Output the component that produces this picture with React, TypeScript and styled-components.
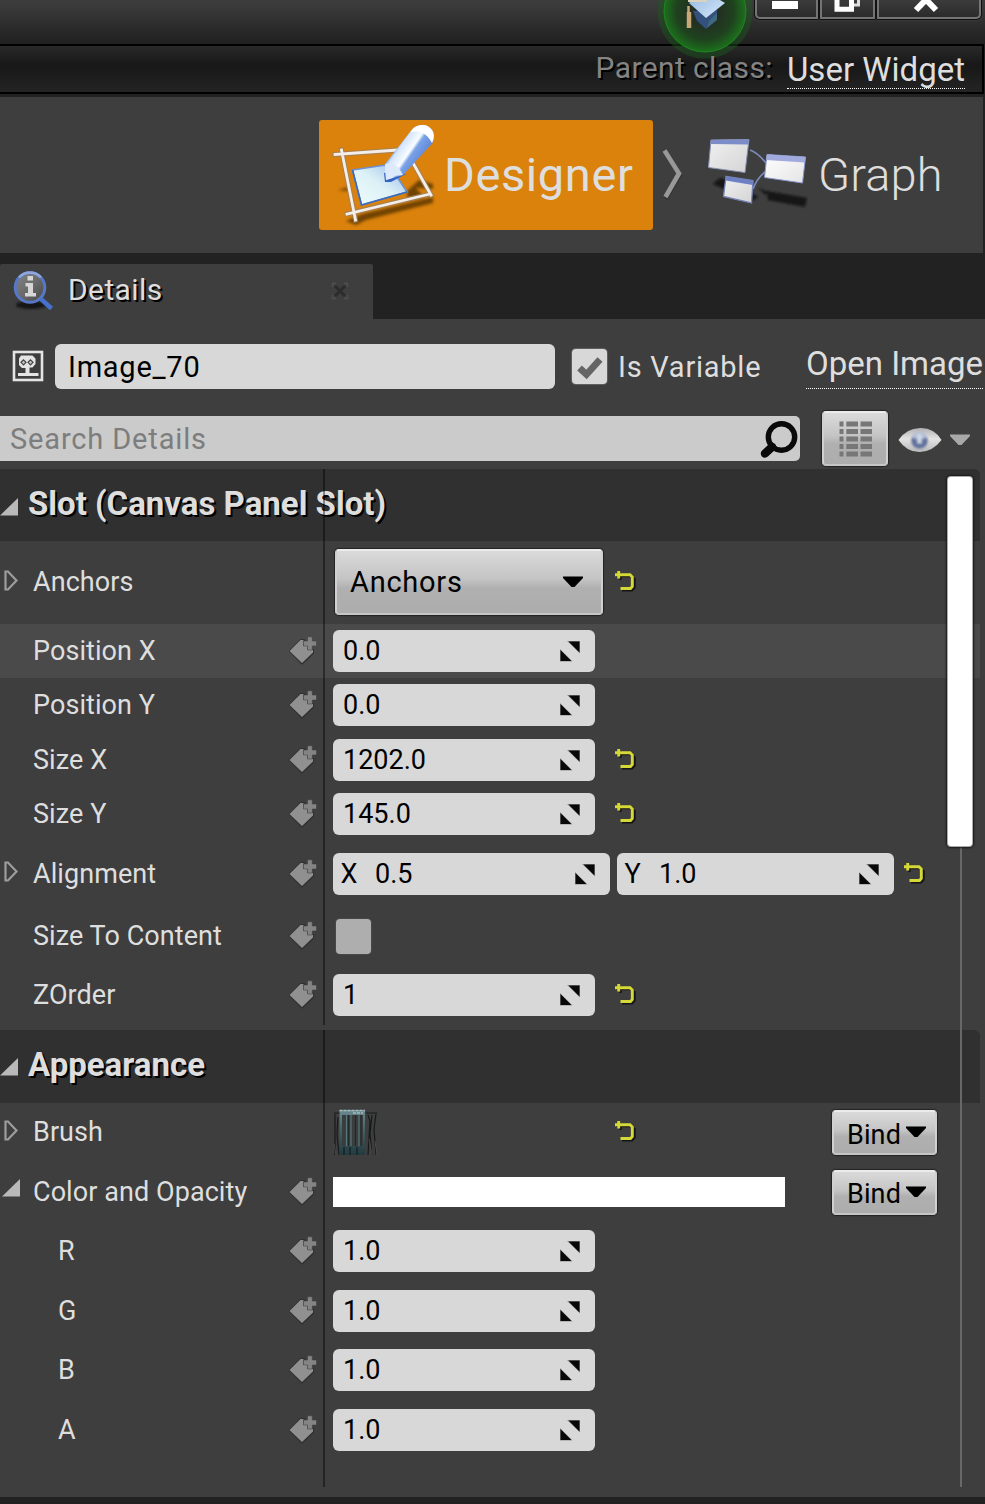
import React from 'react';
import styled, { createGlobalStyle } from 'styled-components';

const GlobalStyle = createGlobalStyle`
  * { box-sizing: border-box; }
  html, body { margin: 0; padding: 0; background: #222; }
  body { font-family: Roboto, "Liberation Sans", sans-serif; color: #dedede; overflow: hidden; }
  svg { display: block; flex: none; overflow: visible; }
`;

const Window = styled.div`
  width: 985px;
  height: 1504px;
  display: flex;
  flex-direction: column;
  background: #222;
  overflow: hidden;
  position: relative;
`;

/* ---------- title bar ---------- */

const TitleBar = styled.header`
  height: 44px;
  flex: none;
  display: flex;
  justify-content: flex-end;
  align-items: flex-start;
  gap: 2px;
  padding-right: 4px;
  background: linear-gradient(#3d3d3d 0, #353535 14px, #292929 30px, #212121 44px);
`;

const WindowButton = styled.button<{ $w: number; $first?: boolean; $last?: boolean }>`
  width: ${(p) => p.$w}px;
  height: 19px;
  padding: 0 5px 0 0;
  border: 2px solid #747474;
  border-top: 0;
  border-radius: 0 0 ${(p) => (p.$last ? 5 : 1)}px ${(p) => (p.$first ? 5 : 1)}px;
  background: linear-gradient(#3b3b3b, #2b2b2b);
  box-shadow: 0 0 0 1px #111, 0 2px 1px 1px #3d3d3d66;
  display: flex;
  justify-content: center;
  align-items: flex-start;
`;

const TutorialBadge = styled.div`
  position: absolute;
  left: 657px;
  top: -37px;
  width: 96px;
  height: 96px;
`;

const MenuBar = styled.div`
  height: 50px;
  flex: none;
  margin-right: 1px;
  border: solid #000;
  border-width: 2px 2px 2px 0;
  background: linear-gradient(#292929, #181818 40%, #1b1b1b 60%, #242424);
  display: flex;
  justify-content: flex-end;
  align-items: flex-start;
  padding-right: 17px;
`;

const ParentLabel = styled.span`
  position: relative;
  font-size: 30px;
  line-height: 36px;
  margin-top: 4px;
  margin-right: 14px;
  letter-spacing: 0.4px;
  color: #848484;
  text-shadow: 2px 2px 0 #000;
`;

const Link = styled.a<{ $top: number; $h: number }>`
  font-size: 33px;
  line-height: 40px;
  height: ${(p) => p.$h}px;
  margin-top: ${(p) => p.$top}px;
  color: #dedede;
  white-space: nowrap;
  border-bottom: 1px dotted #fff;
`;

/* ---------- mode toolbar ---------- */

const ModeBar = styled.nav`
  height: 156px;
  flex: none;
  margin: 3px 2px 0 0;
  background: #3e3e3e;
  display: flex;
  align-items: flex-start;
  padding: 23px 0 0 319px;
`;

const ModeButton = styled.button<{ $active?: boolean }>`
  width: ${(p) => (p.$active ? 334 : 250)}px;
  height: 110px;
  padding: 0 0 0 ${(p) => (p.$active ? 15 : 0)}px;
  border: 0;
  border-radius: 3px;
  background: ${(p) => (p.$active ? '#da820c' : 'transparent')};
  color: #dedede;
  font-family: inherit;
  font-size: 47px;
  font-weight: ${(p) => (p.$active ? 400 : 300)};
  letter-spacing: ${(p) => (p.$active ? 0.6 : 0.1)}px;
  display: flex;
  align-items: center;
  gap: ${(p) => (p.$active ? 10 : 8)}px;
`;

const ModeName = styled.span`
  padding-bottom: 1px;
`;

const ModeArrow = styled.div`
  width: 55px;
  height: 110px;
  padding: 28px 0 0 9px;
`;

/* ---------- tabs ---------- */

const TabStrip = styled.div`
  height: 66px;
  flex: none;
  display: flex;
  align-items: flex-end;
  background: #222;
`;

const Tab = styled.div`
  width: 373px;
  height: 55px;
  border-radius: 2px 2px 0 0;
  background: #3e3e3e;
  display: flex;
  align-items: flex-start;
  padding: 7px 24px 0 13px;
`;

const TabTitle = styled.span`
  flex: 1;
  margin-left: 15px;
  font-size: 30px;
  line-height: 38px;
  letter-spacing: 0.4px;
  text-shadow: 2px 2px 0 #000;
`;

const TabClose = styled.div`
  margin-top: 11px;
`;

/* ---------- details panel ---------- */

const Panel = styled.main`
  height: 1178px;
  flex: none;
  background: #3e3e3e;
  display: flex;
  flex-direction: column;
`;

const NameRow = styled.div`
  height: 97px;
  flex: none;
  display: flex;
  align-items: flex-start;
  padding: 25px 0 0 12px;
  overflow: hidden;
`;

const WidgetIconSlot = styled.div`
  margin-top: 6px;
`;

const NameField = styled.div`
  width: 500px;
  height: 45px;
  margin-left: 11px;
  padding-left: 13px;
  border-radius: 6px;
  background: #d8d8d8;
  color: #000;
  font-size: 29px;
  line-height: 46px;
  letter-spacing: 0.75px;
`;

const Check = styled.span<{ $on?: boolean }>`
  width: 35px;
  height: 35px;
  flex: none;
  border-radius: 4px;
  background: ${(p) => (p.$on ? '#d8d8d8' : '#aeaeae')};
  box-shadow: 0 0 1px 1px ${(p) => (p.$on ? '#88888880' : '#55555580')};
  display: flex;
  align-items: center;
  justify-content: center;
`;

const CheckLabel = styled.label`
  display: flex;
  align-items: center;
  gap: 11px;
  height: 45px;
  margin-left: 17px;
  width: 234px;
  font-size: 29px;
  letter-spacing: 0.75px;
  white-space: nowrap;
`;

const CheckSpacer = styled.div`
  padding-left: 2.5px;
`;

const SearchRow = styled.div`
  height: 53px;
  flex: none;
  display: flex;
  align-items: flex-start;
`;

const SearchField = styled.div`
  width: 800px;
  height: 45px;
  padding: 0 2px 0 10px;
  border-radius: 0 5px 5px 0;
  background: #cbcbcb;
  color: #7d7d7d;
  font-size: 29px;
  letter-spacing: 0.85px;
  display: flex;
  align-items: center;
  justify-content: space-between;
`;

const SlateButton = styled.button<{ $w: number; $h: number }>`
  width: ${(p) => p.$w}px;
  height: ${(p) => p.$h}px;
  flex: none;
  padding: 0;
  border: 2px solid;
  border-color: #ebebeb #d0d0d0 #c6c6c6 #d0d0d0;
  border-radius: 4px;
  background: linear-gradient(#dadada, #c4c4c4 45%, #b0b0b0 60%, #adadad);
  box-shadow: 0 0 1px 1px #1d1d1dcc;
  color: #000;
  font-family: inherit;
  font-size: 27px;
  display: flex;
  align-items: center;
  justify-content: center;
`;

const GridToggle = styled(SlateButton)`
  margin: -5px 10px 0 22px;
  padding-left: 2px;
`;

const AnchorsButton = styled(SlateButton)`
  justify-content: space-between;
  padding: 0 18px 0 13px;
  font-size: 29px;
  letter-spacing: 0.75px;
  margin-left: 2px;
  margin-right: 12px;
  margin-bottom: 2px;
`;

const BindButton = styled(SlateButton)`
  gap: 5px;
  padding: 4px 0 0 4px;
  letter-spacing: 0.1px;
  svg { margin-top: -5px; }
`;

const ViewOptions = styled.div`
  display: flex;
  align-items: center;
  gap: 8px;
  margin-top: 11px;
`;

const Properties = styled.div`
  position: relative;
  flex: 1;
`;

const Section = styled.section<{ $h: number }>`
  position: relative;
  height: ${(p) => p.$h}px;
  margin-bottom: 5px;
  &::after {
    content: '';
    position: absolute;
    left: 323px;
    top: 0;
    width: 2px;
    height: 100%;
    background: rgba(0, 0, 0, 0.42);
  }
`;

const SectionHeader = styled.h2<{ $h: number }>`
  width: 980px;
  height: ${(p) => p.$h}px;
  margin: 0;
  border-radius: 0 6px 0 0;
  background: #303030;
  display: flex;
  align-items: center;
  gap: 10px;
  padding: 0 0 ${(p) => (p.$h > 72 ? 5 : 3)}px 0;
  font-size: 33px;
  font-weight: 700;
  text-shadow: 2px 2px 0 #000;
  svg { margin-top: 6px; }
`;

const PropRow = styled.div<{ $h: number; $hover?: boolean }>`
  width: 980px;
  height: ${(p) => p.$h}px;
  display: flex;
  align-items: center;
  background: ${(p) => (p.$hover ? '#4a4a4a' : 'transparent')};
`;

const Expander = styled.div`
  width: 33px;
  height: 26px;
  flex: none;
`;

const PropName = styled.div<{ $indent?: boolean; $lift?: boolean }>`
  width: 255px;
  flex: none;
  padding-left: ${(p) => (p.$indent ? 25 : 0)}px;
  padding-bottom: ${(p) => (p.$lift ? 2 : 0)}px;
  font-size: 27px;
  line-height: 32px;
  letter-spacing: 0.07px;
`;

const TagSlot = styled.div`
  width: 45px;
  height: 31px;
  flex: none;
`;

const ValueArea = styled.div`
  flex: 1;
  display: flex;
  align-items: center;
`;

const SpinBox = styled.div<{ $w: number }>`
  width: ${(p) => p.$w}px;
  height: 42px;
  flex: none;
  padding: 0 14px 0 ${(p) => (p.$w > 262 ? 7.5 : 10)}px;
  margin-right: ${(p) => (p.$w > 262 ? 7.5 : 20)}px;
  border-radius: 6px;
  background: #d8d8d8;
  color: #000;
  font-size: 27px;
  display: flex;
  align-items: center;
  justify-content: space-between;
`;

const Axis = styled.span`
  display: inline-block;
  width: 34.5px;
`;

const SpinText = styled.span`
  padding-bottom: 1px;
`;

const Swatch = styled.div`
  width: 452px;
  height: 30px;
  margin-right: 47px;
  background: #fff;
`;

const BrushThumb = styled.div`
  width: 282px;
`;

const ResetSlot = styled.div<{ $w?: number }>`
  width: ${(p) => p.$w ?? 20}px;
  margin-top: -3px;
`;

const AlignmentReset = styled.div`
  margin-left: 3px;
`;

const ScrollTrack = styled.div`
  position: absolute;
  left: 960px;
  top: 7px;
  width: 1.5px;
  height: 1011px;
  background: #686868;
`;

const ScrollThumb = styled.div`
  position: absolute;
  left: -12px;
  top: 1px;
  width: 24px;
  height: 369px;
  border-radius: 3px;
  background: #fff;
  box-shadow: 0 0 0 1px #aaa, 0 0 2px 2px #1a1a1a;
`;

/* ---------- icons ---------- */

const DesignerIcon = () => (
  <svg width="100" height="100" viewBox="0 0 100 100">
    <defs>
      <linearGradient id="sheet" x1="0" y1="1" x2="1" y2="0">
        <stop offset="0" stopColor="#effdfd" />
        <stop offset=".5" stopColor="#dcf1f6" />
        <stop offset="1" stopColor="#94b4e8" />
      </linearGradient>
      <linearGradient id="pen" gradientUnits="userSpaceOnUse" x1="63" y1="20" x2="86" y2="36">
        <stop offset="0" stopColor="#6f9be0" />
        <stop offset=".14" stopColor="#d4e5fb" />
        <stop offset=".5" stopColor="#f8fcff" />
        <stop offset=".62" stopColor="#7aa2e6" />
        <stop offset="1" stopColor="#5f8ade" />
      </linearGradient>
      <filter id="soft" x="-20%" y="-50%" width="140%" height="200%"><feGaussianBlur stdDeviation="1.6" /></filter>
    </defs>
    <path d="M12 96L28 89 99 72V78L32 95 22 100ZM73 66L85 55 99 59V64L82 63 90 72 74 75ZM4 65L15 62V66Z" fill="#5f3804" opacity=".85" filter="url(#soft)" />
    <path d="M1 29.500L64 25M7.500 25L21.500 95M13 89L96 69M79 38L97 70" stroke="#a0805c" strokeWidth="5" strokeLinecap="square" opacity=".85" />
    <path d="M1 29.500L64 25M7.500 25L21.500 95M13 89L96 69M79 38L97 70" stroke="#f3eee9" strokeWidth="2.800" strokeLinecap="square" />
    <path d="M18.500 45L55 39.500 73 67 27.500 80Z" fill="url(#sheet)" stroke="#6a92d4" strokeWidth="1.600" strokeLinejoin="round" />
    <path d="M18.500 45L27.500 80 73 67" fill="none" stroke="#3d69b8" strokeWidth="1.600" />
    <path d="M50 48L51 57 57 57 72 49 60 47Z" fill="#3464c4" />
    <path d="M76 7C80 0 90-2 95 2 100 5 101 13 98.500 18L69 50 52 55 51 39Z" fill="url(#pen)" />
    <path d="M51 39L58 38 65 43 69 50 60 51 52 55Z" fill="#dceafb" />
    <path d="M77 7C80 0 90-2 95 2 101 6 101 13 98 18 93 9 87 5 77 7Z" fill="#fff" />
  </svg>
);

const GraphIcon = () => (
  <svg width="102" height="80" viewBox="0 0 102 80">
    <defs>
      <filter id="soft2" x="-20%" y="-50%" width="140%" height="200%"><feGaussianBlur stdDeviation="1.3" /></filter>
      <linearGradient id="win" x1="0" y1="0" x2="1" y2="1">
        <stop offset="0" stopColor="#fff" /><stop offset="1" stopColor="#e4e4e6" />
      </linearGradient>
      <linearGradient id="winDim" x1="0" y1="0" x2="1" y2="1">
        <stop offset="0" stopColor="#f0f0f0" /><stop offset="1" stopColor="#d4d4d6" />
      </linearGradient>
    </defs>
    <path d="M59 56L99 63 97 72 60 65ZM5 49L12 43 20 45 16 54ZM43 58L50 62 44 66ZM50 53L60 57 58 60Z" fill="#141414" filter="url(#soft2)" />
    <path d="M42 15Q50 18 58 28M57 37Q49 43 45 54" fill="none" stroke="#7b89b4" strokeWidth="1.700" />
    <path d="M3 5L41 4.500 37 37.500 .5 32.500Z" fill="url(#winDim)" stroke="#8992b4" strokeWidth="1" />
    <path d="M3 5L41 4.500 40.300 9.500 2.300 9Z" fill="#7c8cc8" />
    <path d="M59 19.500L97.500 22 94.500 48 56.500 42.500Z" fill="url(#win)" stroke="#8c96ca" strokeWidth="1" />
    <path d="M59 19.500L97.500 22 96.800 27.500 58.200 25Z" fill="#a0aadd" />
    <path d="M18 41.500L45 45.500 43.500 68 15.500 61.500Z" fill="url(#winDim)" stroke="#7684b4" strokeWidth="1.300" />
    <path d="M18 41.500L45 45.500 44.700 50 17.500 45.500Z" fill="#6e80c4" />
  </svg>
);

const ChevronIcon = () => (
  <svg width="24" height="52" viewBox="0 0 24 52">
    <path d="M3 4L18 27 4 51" fill="none" stroke="#222" strokeWidth="4" opacity=".4" />
    <path d="M2.500 2.500L17 25.500 3.500 49" fill="none" stroke="#989898" strokeWidth="4.600" />
  </svg>
);

const InspectIcon = () => (
  <svg width="40" height="42" viewBox="0 0 40 42">
    <defs>
      <linearGradient id="lens" x1="0" y1="0" x2="1" y2="1">
        <stop offset="0" stopColor="#858585" /><stop offset=".5" stopColor="#6a6a6a" /><stop offset="1" stopColor="#454545" />
      </linearGradient>
      <filter id="soft3" x="-20%" y="-60%" width="140%" height="220%"><feGaussianBlur stdDeviation="1.2" /></filter>
    </defs>
    <ellipse cx="18" cy="34" rx="15" ry="4" fill="#161616" filter="url(#soft3)" />
    <path d="M28 28L38.500 37.500" stroke="#4570cc" strokeWidth="4.500" />
    <circle cx="17" cy="16.500" r="14.800" fill="url(#lens)" stroke="#5578c8" strokeWidth="3" />
    <path d="M6 6.500A14.800 14.800 0 0 1 28 6.500" fill="none" stroke="#8fa6dc" strokeWidth="2.600" />
    <path d="M14.500 5H20V9.500H14.500ZM12.500 12H20V22H23V25.500H12V22H15V15.500H12.500Z" fill="#d6d6d6" />
  </svg>
);

const CloseTabIcon = () => (
  <svg width="18" height="18" viewBox="0 0 18 18">
    <path d="M1.500 5V1.500H5M13 1.500H16.500V5M16.500 13V16.500H13M5 16.500H1.500V13" fill="none" stroke="#505050" strokeWidth="1.300" />
    <path d="M4 4L14 14M14 4L4 14" stroke="#2c2c2c" strokeWidth="3" />
  </svg>
);

const ImageWidgetIcon = () => (
  <svg width="32" height="32" viewBox="0 0 32 32">
    <rect x="2" y="2" width="28" height="28" fill="none" stroke="#e4e4e4" strokeWidth="2.600" />
    <path d="M9 5.500H20.500L23.500 8.500V14L20.500 17.500H17.500V23H26.500V26H6V23H13.500V18H10L7 15V8.500Z" fill="#e4e4e4" />
    <path d="M11.500 9.800L14 12.300 11.500 14.800 9 12.300ZM18.500 9.800L21 12.300 18.500 14.800 16 12.300Z" fill="#c4c4c4" stroke="#444" strokeWidth="1.200" />
  </svg>
);

const CheckIcon = () => (
  <svg width="28" height="26" viewBox="0 0 28 26">
    <path d="M3.500 14L10.500 20.500 24 5.500" fill="none" stroke="#656565" strokeWidth="6.800" />
  </svg>
);

const SearchIcon = () => (
  <svg width="38" height="38" viewBox="0 0 38 38">
    <circle cx="21.500" cy="17" r="13.200" fill="none" stroke="#0a0a0a" strokeWidth="5.400" />
    <path d="M12 27L5 33.500" stroke="#0a0a0a" strokeWidth="8.500" strokeLinecap="round" />
  </svg>
);

const GridIcon = () => (
  <svg width="34" height="36" viewBox="0 0 34 36">
    {[0.5, 8, 15.5, 23, 30.5].map((y) => (
      <path key={y} d={`M0.500 ${y}H4.500V${y + 5}H0.500ZM7.300 ${y}H19V${y + 5}H7.300ZM21.500 ${y}H33V${y + 5}H21.500Z`} fill="#777" />
    ))}
  </svg>
);

const EyeIcon = () => (
  <svg width="44" height="26" viewBox="0 0 44 26">
    <defs>
      <linearGradient id="eye" x1="0" y1="0" x2="0" y2="1">
        <stop offset="0" stopColor="#b0b0b0" /><stop offset=".45" stopColor="#e4e4e4" /><stop offset="1" stopColor="#b8b8b8" />
      </linearGradient>
      <filter id="soft4"><feGaussianBlur stdDeviation=".8" /></filter>
    </defs>
    <path d="M0.500 13Q8 1.500 22 1T43.500 13Q35 24.500 22 25T0.500 13Z" fill="url(#eye)" />
    <g filter="url(#soft4)">
      <circle cx="21.500" cy="13.500" r="8.300" fill="#62729c" />
      <path d="M13.800 10A8.500 8.500 0 0 1 29.200 10L25 12H18Z" fill="#b3bfd9" />
      <path d="M19.300 7H23.700V16.500H19.300Z" fill="#cdd7e6" />
    </g>
  </svg>
);

const CaretIcon = ({ color }: { color: string }) => (
  <svg width="20" height="12" viewBox="0 0 20 12">
    <path d="M0 .5H20V2L11.500 11H8.500L0 2Z" fill={color} />
  </svg>
);

const OpenArrow = ({ x = 0 }: { x?: number }) => (
  <svg width={18 + x} height="18" viewBox={`${-x} 0 ${18 + x} 18`}>
    <path d="M0 17.500L18 0V17.500Z" fill="#b9b9b9" />
  </svg>
);

const ClosedArrow = () => (
  <svg width="20" height="22" viewBox="0 0 20 22">
    <path d="M5.500 1.500H8L16.500 10.500 8 19.500H5.500Z" fill="none" stroke="#9d9d9d" strokeWidth="2.200" />
  </svg>
);

const TagIcon = () => (
  <svg width="30" height="30" viewBox="0 0 30 30">
    <path d="M2 15L13 4H16V10H20V14H25V17L14 27.500Z" fill="#303030" stroke="#303030" strokeWidth="2" strokeLinejoin="round" />
    <path d="M1.500 15L12.500 4H15.500V10H19.500V14H25V16.500L14 27Z" fill="#909090" />
    <path d="M19.500 .8H24.300V5H28.500V10H24.300V14H19.500V10H15.500V5H19.500Z" fill="#848484" stroke="#3a3a3a" strokeWidth=".5" />
  </svg>
);

const SpinIcon = () => (
  <svg width="22" height="22" viewBox="0 0 22 22">
    <path d="M8 1H21V13.500ZM1 9V21.500H13.500Z" fill="#0c0c0c" opacity=".35" />
    <path d="M9.500 1.500H20.500V12.500ZM1.500 10V21H12.500Z" fill="#080808" />
  </svg>
);

const ResetIcon = () => (
  <svg width="20" height="20" viewBox="0 0 20 20">
    <path d="M1.500 5H15.500L19.500 8V16.500L17 19.300H7M5.500 2V9" fill="none" stroke="#151515" strokeWidth="2.400" />
    <path d="M0 3.700H15L17.300 6V15.500L15.500 17.500H5.500M3.700 0V7.500" fill="none" stroke="#d5d938" strokeWidth="2.900" />
  </svg>
);

const BrushPreview = () => (
  <svg width="45" height="47" viewBox="0 0 45 47">
    <defs>
      <linearGradient id="gate" x1="0" y1="0" x2="0" y2="1">
        <stop offset="0" stopColor="#6b8a90" /><stop offset=".4" stopColor="#46666c" /><stop offset="1" stopColor="#23393d" />
      </linearGradient>
    </defs>
    <path d="M1 4H7M2 5V46M5 8L4 25 6 46M33 4H44M35 6L37 12 35 46M39 6L37 24 39 46M43 5L41 20 43 46" fill="none" stroke="#171a1b" strokeWidth="1.200" />
    <path d="M1 35L3 46M36 30L39 46M42 32L44 46" stroke="#504747" strokeWidth="1" />
    <path d="M6.500 1H32V46H6.500Z" fill="url(#gate)" />
    <path d="M9 6H30V37H9Z" fill="#3a3d3e" />
    <path d="M13.500 6V37M18 6V37M26 6V37" stroke="#56777b" strokeWidth="1.200" />
    <path d="M15.500 6V37M22.500 6V37M28 6V37" stroke="#232728" strokeWidth="1" />
    <path d="M6.500 1.500H32M20 4H30" stroke="#a6bcc0" strokeWidth="1.500" strokeDasharray="3 1" />
    <path d="M11 38V46M17 38V46M24 38V46" stroke="#14262a" strokeWidth="1.500" />
  </svg>
);

const TutorialIcon = () => (
  <svg width="96" height="96" viewBox="0 0 96 96">
    <defs>
      <radialGradient id="glow">
        <stop offset=".25" stopColor="#242b24" />
        <stop offset=".7" stopColor="#1f421e" />
        <stop offset="1" stopColor="#1c701c" />
      </radialGradient>
      <linearGradient id="cap" x1="0" y1="0" x2="1" y2="1">
        <stop offset="0" stopColor="#8fb6e0" /><stop offset="1" stopColor="#d8e8fa" />
      </linearGradient>
    </defs>
    <circle cx="48" cy="48" r="47.500" fill="#1c5a1c" opacity=".45" />
    <circle cx="48" cy="48" r="41" fill="url(#glow)" stroke="#1d8420" strokeWidth="1" />
    <path d="M36 48L40 58 49 66 60 56V46Z" fill="#34507c" />
    <path d="M52 58L60 50V57L50 65Z" fill="#3d6a80" />
    <path d="M32 40L48 28 68 40 49 55Z" fill="url(#cap)" />
    <path d="M31 38H50" stroke="#d9d3bd" strokeWidth="2" />
    <path d="M31.500 43V50" stroke="#c8a876" strokeWidth="2.500" />
    <path d="M32 49V65" stroke="#c8a876" strokeWidth="4.500" />
  </svg>
);

/* ---------- rows ---------- */

type RowProps = {
  name: string;
  h: number;
  arrow?: 'open' | 'closed';
  tag?: boolean;
  hover?: boolean;
  indent?: boolean;
  lift?: boolean;
  children: React.ReactNode;
};

const Row = ({ name, h, arrow, tag, hover, indent, lift, children }: RowProps) => (
  <PropRow $h={h} $hover={hover}>
    <Expander>
      {arrow === 'open' && <OpenArrow x={2} />}
      {arrow === 'closed' && <ClosedArrow />}
    </Expander>
    <PropName $indent={indent} $lift={lift}>{name}</PropName>
    <TagSlot>{tag && <TagIcon />}</TagSlot>
    <ValueArea>{children}</ValueArea>
  </PropRow>
);

const NumberBox = ({ value, axis }: { value: string; axis?: string }) => (
  <SpinBox $w={axis ? 276.5 : 262}>
    <SpinText>
      {axis && <Axis>{axis}</Axis>}
      {value}
    </SpinText>
    <SpinIcon />
  </SpinBox>
);

const Reset = ({ w }: { w?: number }) => (
  <ResetSlot $w={w}><ResetIcon /></ResetSlot>
);

const Bind = () => (
  <BindButton $w={105} $h={45}>
    Bind
    <CaretIcon color="#000" />
  </BindButton>
);

export default function App() {
  return (
    <>
      <GlobalStyle />
      <Window>
        <TitleBar>
          <WindowButton $w={63} $first>
            <svg width="26" height="10" viewBox="0 0 26 10"><path d="M1 1H27V9H1Z" fill="#fff" /></svg>
          </WindowButton>
          <WindowButton $w={55}>
            <svg width="26" height="13" viewBox="0 0 26 13">
              <path d="M22 5H26.500V0" fill="none" stroke="#ddd" strokeWidth="3" />
              <path d="M5-4V9.300H19.500V-4" fill="none" stroke="#fff" strokeWidth="5" />
            </svg>
          </WindowButton>
          <WindowButton $w={104} $last>
            <svg width="26" height="13" viewBox="0 0 26 13">
              <path d="M2 10L15.500-4M22 10L8.500-4" stroke="#fff" strokeWidth="6" />
            </svg>
          </WindowButton>
        </TitleBar>
        <TutorialBadge><TutorialIcon /></TutorialBadge>
        <MenuBar>
          <ParentLabel>Parent class:</ParentLabel>
          <Link $top={4} $h={39}>User Widget</Link>
        </MenuBar>
        <ModeBar>
          <ModeButton $active><DesignerIcon /><ModeName>Designer</ModeName></ModeButton>
          <ModeArrow><ChevronIcon /></ModeArrow>
          <ModeButton><GraphIcon /><ModeName>Graph</ModeName></ModeButton>
        </ModeBar>
        <TabStrip>
          <Tab>
            <InspectIcon />
            <TabTitle>Details</TabTitle>
            <TabClose><CloseTabIcon /></TabClose>
          </Tab>
        </TabStrip>
        <Panel>
          <NameRow>
            <WidgetIconSlot><ImageWidgetIcon /></WidgetIconSlot>
            <NameField>Image_70</NameField>
            <CheckLabel><Check $on><CheckIcon /></Check>Is Variable</CheckLabel>
            <Link $top={0} $h={45}>Open Image</Link>
          </NameRow>
          <SearchRow>
            <SearchField>Search Details<SearchIcon /></SearchField>
            <GridToggle $w={66} $h={55}><GridIcon /></GridToggle>
            <ViewOptions><EyeIcon /><CaretIcon color="#a8a8a8" /></ViewOptions>
          </SearchRow>
          <Properties>
            <Section $h={556}>
              <SectionHeader $h={72}><OpenArrow />Slot (Canvas Panel Slot)</SectionHeader>
              <Row name="Anchors" h={83} arrow="closed" lift>
                <AnchorsButton $w={268} $h={66}>Anchors<CaretIcon color="#000" /></AnchorsButton>
                <Reset />
              </Row>
              <Row name="Position X" h={54} tag hover><NumberBox value="0.0" /></Row>
              <Row name="Position Y" h={54} tag><NumberBox value="0.0" /></Row>
              <Row name="Size X" h={56} tag><NumberBox value="1202.0" /><Reset /></Row>
              <Row name="Size Y" h={52} tag><NumberBox value="145.0" /><Reset /></Row>
              <Row name="Alignment" h={68} arrow="closed" tag>
                <NumberBox axis="X" value="0.5" />
                <NumberBox axis="Y" value="1.0" />
                <AlignmentReset><Reset /></AlignmentReset>
              </Row>
              <Row name="Size To Content" h={57} tag lift><CheckSpacer><Check /></CheckSpacer></Row>
              <Row name="ZOrder" h={60} tag><NumberBox value="1" /><Reset /></Row>
            </Section>
            <Section $h={457}>
              <SectionHeader $h={73}><OpenArrow />Appearance</SectionHeader>
              <Row name="Brush" h={59} arrow="closed" lift>
                <BrushThumb><BrushPreview /></BrushThumb>
                <Reset w={217} />
                <Bind />
              </Row>
              <Row name="Color and Opacity" h={60} arrow="open" tag><Swatch /><Bind /></Row>
              <Row name="R" h={58} tag indent><NumberBox value="1.0" /></Row>
              <Row name="G" h={62} tag indent><NumberBox value="1.0" /></Row>
              <Row name="B" h={56} tag indent><NumberBox value="1.0" /></Row>
              <Row name="A" h={64} tag indent><NumberBox value="1.0" /></Row>
            </Section>
            <ScrollTrack><ScrollThumb /></ScrollTrack>
          </Properties>
        </Panel>
      </Window>
    </>
  );
}
